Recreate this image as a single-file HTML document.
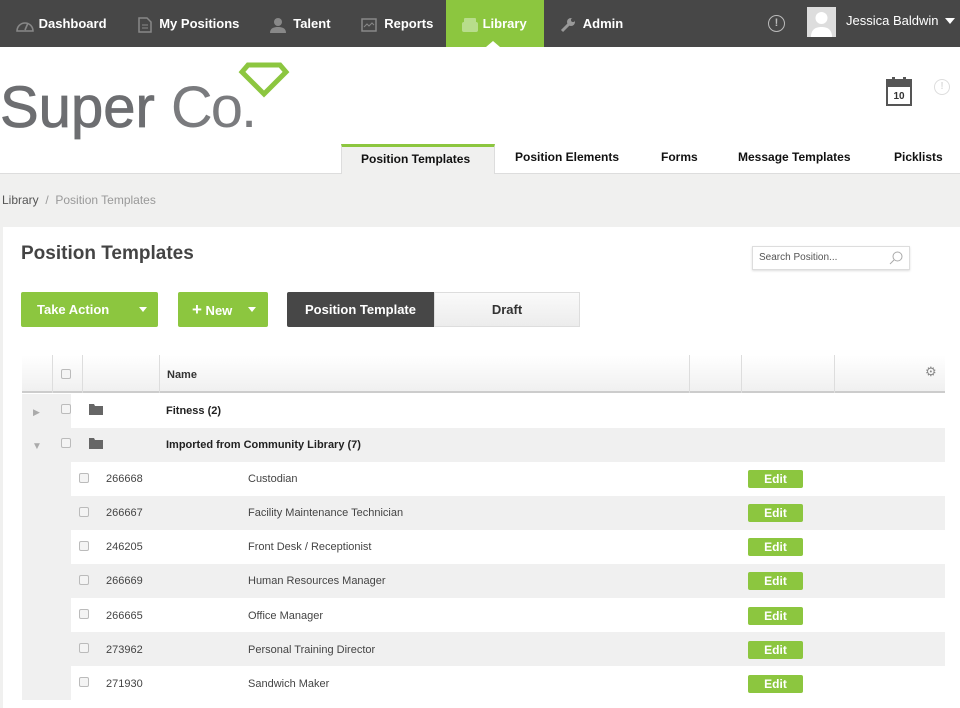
<!DOCTYPE html>
<html><head><meta charset="utf-8"><style>
*{margin:0;padding:0;box-sizing:border-box}
body{width:960px;height:708px;overflow:hidden;background:#fff;font-family:"Liberation Sans",Arial,sans-serif;position:relative}
.a{position:absolute}
.nav{left:0;top:0;width:960px;height:47px;background:#474747}
.ni{top:0;height:47px;line-height:47px;color:#fff;font-weight:bold;font-size:13px}
.ic{display:inline-block;vertical-align:middle}
.tab{top:150px;font-weight:bold;font-size:12px;color:#111}
.cb{width:10px;height:10px;border:1px solid #bbb;border-radius:2px;background:#f4f4f4}
.edit{width:55px;height:18px;background:#8cc63f;border-radius:2px;color:#fff;font-weight:bold;font-size:12px;text-align:center;line-height:18px}
.vd{top:355px;width:1px;height:38px;background:#ddd}
</style></head><body>
<div class="a nav"></div>
<div class="a ni" style="left:15px"><svg class="ic" width="20" height="16" viewBox="0 0 20 16"><path d="M2 14 A8 8 0 1 1 18 14 Z" fill="none" stroke="#888" stroke-width="1.6"/><path d="M10 13 L13 6" stroke="#888" stroke-width="1.6"/></svg> Dashboard</div>
<div class="a ni" style="left:138px"><svg class="ic" width="14" height="16" viewBox="0 0 14 16"><path d="M1 1h8l4 4v10H1z" fill="none" stroke="#888" stroke-width="1.5"/><path d="M4 8h6M4 11h6" stroke="#888"/></svg>&nbsp; My Positions</div>
<div class="a ni" style="left:270px"><svg class="ic" width="16" height="16" viewBox="0 0 16 16"><circle cx="8" cy="5" r="4" fill="#888"/><path d="M0 16c0-5 4-6 8-6s8 1 8 6z" fill="#888"/></svg>&nbsp; Talent</div>
<div class="a ni" style="left:361px"><svg class="ic" width="16" height="14" viewBox="0 0 16 14"><rect x="1" y="1" width="14" height="12" fill="none" stroke="#888" stroke-width="1.5"/><path d="M3 9l3-3 2 2 3-3 2 2" fill="none" stroke="#888"/></svg>&nbsp; Reports</div>
<div class="a" style="left:446px;top:0;width:98px;height:47px;background:#8cc63f"></div>
<div class="a" style="left:486px;top:41px;width:0;height:0;border-left:7px solid transparent;border-right:7px solid transparent;border-bottom:6px solid #fff"></div>
<div class="a ni" style="left:461px"><svg class="ic" width="18" height="14" viewBox="0 0 18 14"><rect x="1" y="4" width="16" height="10" rx="2" fill="#b8dd8c"/><rect x="3" y="0" width="12" height="5" rx="1" fill="#b8dd8c"/></svg> Library</div>
<div class="a ni" style="left:560px"><svg class="ic" width="16" height="16" viewBox="0 0 16 16"><path d="M2 14 L9 7" stroke="#999" stroke-width="3"/><circle cx="11" cy="5" r="4" fill="#999"/><circle cx="13" cy="3" r="2" fill="#474747"/></svg>&nbsp; Admin</div>
<div class="a" style="left:768px;top:15px;width:17px;height:17px;border:1.5px solid #bbb;border-radius:50%;color:#bbb;font-size:11px;font-weight:bold;text-align:center;line-height:14px">!</div>
<div class="a" style="left:807px;top:7px;width:29px;height:30px;background:#ddd"><svg width="29" height="30" viewBox="0 0 29 30"><circle cx="14.5" cy="11" r="6" fill="#fff"/><path d="M4 30c0-8 5-10 10.5-10s10.5 2 10.5 10z" fill="#fff"/></svg></div>
<div class="a" style="left:846px;top:13px;color:#fff;font-size:13px">Jessica Baldwin</div>
<div class="a" style="left:945px;top:18px;border-left:5px solid transparent;border-right:5px solid transparent;border-top:6px solid #fff"></div>

<div class="a" style="left:0;top:76px;font-size:58px;color:#6d6e71;line-height:64px;white-space:nowrap"><span style="-webkit-text-stroke:0.8px #6d6e71">Super</span> <span style="color:#7a7b7e;letter-spacing:-2px">Co.</span></div>
<svg class="a" style="left:238px;top:60px" width="52" height="38" viewBox="0 0 52 38"><path d="M10 5H42L48 12L26 34L4 12Z" fill="none" stroke="#8cc63f" stroke-width="5" stroke-linejoin="miter"/></svg>

<svg class="a" style="left:886px;top:77px" width="26" height="29" viewBox="0 0 26 29"><rect x="1" y="3" width="24" height="25" fill="#fff" stroke="#555" stroke-width="2"/><rect x="1" y="3" width="24" height="7" fill="#555"/><rect x="6" y="0" width="3" height="6" fill="#555"/><rect x="17" y="0" width="3" height="6" fill="#555"/><text x="13" y="22" font-size="10" font-weight="bold" text-anchor="middle" fill="#333" font-family="Liberation Sans">10</text></svg>
<div class="a" style="left:934px;top:79px;width:16px;height:16px;border:1.5px solid #ddd;border-radius:50%;color:#ddd;font-size:10px;font-weight:bold;text-align:center;line-height:13px">!</div>

<div class="a" style="left:0;top:173px;width:960px;height:535px;background:#f0f0ef;border-top:1px solid #ddd"></div>
<div class="a" style="left:341px;top:144px;width:154px;height:30px;background:#f0f0ef;border-top:3px solid #8cc63f;border-left:1px solid #ddd;border-right:1px solid #ddd"></div>
<div class="a tab" style="left:361px;top:152px">Position Templates</div>
<div class="a tab" style="left:515px">Position Elements</div>
<div class="a tab" style="left:661px">Forms</div>
<div class="a tab" style="left:738px">Message Templates</div>
<div class="a tab" style="left:894px">Picklists</div>
<div class="a" style="left:2px;top:193px;font-size:12px;color:#555">Library <span style="color:#999">&nbsp;/&nbsp; Position Templates</span></div>

<div class="a" style="left:3px;top:227px;width:957px;height:481px;background:#fff"></div>
<div class="a" style="left:21px;top:243px;font-size:19px;font-weight:bold;color:#444">Position Templates</div>
<div class="a" style="left:752px;top:246px;width:158px;height:24px;border:1px solid #ddd;box-shadow:0 1px 2px #ddd;font-size:10px;color:#555;line-height:22px;padding-left:6px">Search Position...<svg class="a" style="right:6px;top:4px" width="14" height="14" viewBox="0 0 14 14"><circle cx="8.5" cy="5.5" r="4.5" fill="none" stroke="#aaa"/><path d="M5 9L1 13" stroke="#aaa"/></svg></div>

<div class="a" style="left:21px;top:292px;width:137px;height:35px;background:#8cc63f;border-radius:2px;color:#fff;font-weight:bold;font-size:13px;line-height:35px;padding-left:16px">Take Action<span class="a" style="left:118px;top:15px;border-left:4px solid transparent;border-right:4px solid transparent;border-top:5px solid #fff"></span></div>
<div class="a" style="left:178px;top:292px;width:90px;height:35px;background:#8cc63f;border-radius:2px;color:#fff;font-weight:bold;font-size:13px;line-height:35px;padding-left:14px"><span style="font-size:17px">+</span> New<span class="a" style="left:70px;top:15px;border-left:4px solid transparent;border-right:4px solid transparent;border-top:5px solid #fff"></span></div>
<div class="a" style="left:287px;top:292px;width:147px;height:35px;background:#474747;color:#fff;font-weight:bold;font-size:13px;line-height:35px;text-align:center;border-radius:2px 0 0 2px">Position Template</div>
<div class="a" style="left:434px;top:292px;width:146px;height:35px;background:linear-gradient(#fafafa,#ececec);border:1px solid #ddd;color:#333;font-weight:bold;font-size:13px;line-height:33px;text-align:center">Draft</div>

<div class="a" style="left:22px;top:355px;width:923px;height:38px;background:linear-gradient(#fff,#f0f0f0);border-bottom:2px solid #ccc"></div>
<div class="a vd" style="left:52px"></div><div class="a vd" style="left:82px"></div><div class="a vd" style="left:159px"></div><div class="a vd" style="left:689px"></div><div class="a vd" style="left:741px"></div><div class="a vd" style="left:834px"></div>
<div class="a cb" style="left:61px;top:369px"></div>
<div class="a" style="left:167px;top:369px;font-size:11px;font-weight:bold;color:#333">Name</div>
<div class="a" style="left:925px;top:364px;color:#888;font-size:13px">⚙</div>

<div class="a" style="left:22px;top:394px;width:49px;height:306px;background:#f0f0f0"></div>
<div class="a" style="left:22px;top:428px;width:923px;height:34px;background:#f0f0f0"></div>
<div class="a" style="left:33px;top:407px;color:#aaa;font-size:9px">▶</div>
<div class="a" style="left:32px;top:441px;color:#aaa;font-size:10px">▼</div>
<div class="a cb" style="left:61px;top:404px"></div><div class="a cb" style="left:61px;top:438px"></div>
<svg class="a" style="left:89px;top:404px" width="14" height="11"><path d="M0 0h5l1 2h8v9H0z" fill="#666"/></svg>
<svg class="a" style="left:89px;top:438px" width="14" height="11"><path d="M0 0h5l1 2h8v9H0z" fill="#666"/></svg>
<div class="a" style="left:166px;top:405px;font-size:11px;font-weight:bold;color:#222">Fitness (2)</div>
<div class="a" style="left:166px;top:439px;font-size:11px;font-weight:bold;color:#222">Imported from Community Library (7)</div>

<div class="a" style="left:71px;top:496px;width:874px;height:34px;background:#f0f0f0"></div>
<div class="a" style="left:71px;top:564px;width:874px;height:34px;background:#f0f0f0"></div>
<div class="a" style="left:71px;top:632px;width:874px;height:34px;background:#f0f0f0"></div>

<div class="a cb" style="left:79px;top:473px"></div><div class="a" style="left:106px;top:473px;font-size:11px;color:#444">266668</div><div class="a" style="left:248px;top:473px;font-size:11px;color:#444">Custodian</div><div class="a edit" style="left:748px;top:470px">Edit</div>
<div class="a cb" style="left:79px;top:507px"></div><div class="a" style="left:106px;top:507px;font-size:11px;color:#444">266667</div><div class="a" style="left:248px;top:507px;font-size:11px;color:#444">Facility Maintenance Technician</div><div class="a edit" style="left:748px;top:504px">Edit</div>
<div class="a cb" style="left:79px;top:541px"></div><div class="a" style="left:106px;top:541px;font-size:11px;color:#444">246205</div><div class="a" style="left:248px;top:541px;font-size:11px;color:#444">Front Desk / Receptionist</div><div class="a edit" style="left:748px;top:538px">Edit</div>
<div class="a cb" style="left:79px;top:575px"></div><div class="a" style="left:106px;top:575px;font-size:11px;color:#444">266669</div><div class="a" style="left:248px;top:575px;font-size:11px;color:#444">Human Resources Manager</div><div class="a edit" style="left:748px;top:572px">Edit</div>
<div class="a cb" style="left:79px;top:609px"></div><div class="a" style="left:106px;top:610px;font-size:11px;color:#444">266665</div><div class="a" style="left:248px;top:610px;font-size:11px;color:#444">Office Manager</div><div class="a edit" style="left:748px;top:607px">Edit</div>
<div class="a cb" style="left:79px;top:643px"></div><div class="a" style="left:106px;top:644px;font-size:11px;color:#444">273962</div><div class="a" style="left:248px;top:644px;font-size:11px;color:#444">Personal Training Director</div><div class="a edit" style="left:748px;top:641px">Edit</div>
<div class="a cb" style="left:79px;top:677px"></div><div class="a" style="left:106px;top:678px;font-size:11px;color:#444">271930</div><div class="a" style="left:248px;top:678px;font-size:11px;color:#444">Sandwich Maker</div><div class="a edit" style="left:748px;top:675px">Edit</div>
</body></html>
